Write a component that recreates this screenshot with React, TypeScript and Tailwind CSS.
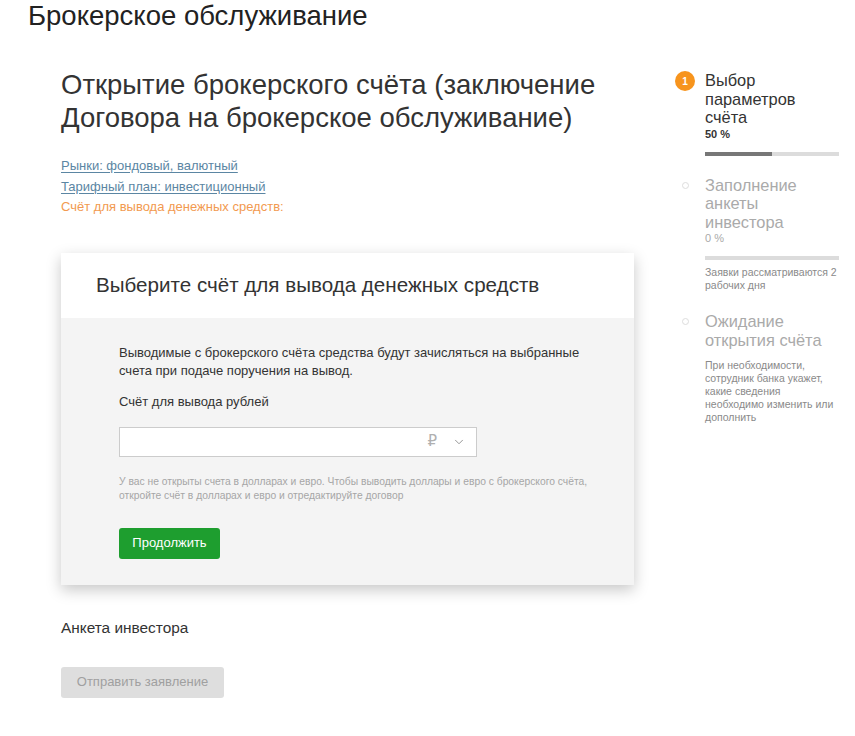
import { ChevronDown } from "lucide-react"

const font = { fontFamily: '"Liberation Sans", Arial, "DejaVu Sans", sans-serif' }

interface StepProps {
  marker: React.ReactNode
  title: string
  active?: boolean
  percent?: number
  note?: string
  noteGap?: string
}

function Step({ marker, title, active = false, percent, note, noteGap = "mt-[6px]" }: StepProps) {
  return (
    <div className="flex">
      <div className="flex w-[20px] justify-center">{marker}</div>
      <div className="ml-[10px] w-[134px]">
        <div className={`w-[124px] text-[16.4px] leading-[18.5px] ${active ? "text-[#333]" : "text-[#aaa]"}`}>
          {title}
        </div>
        {percent !== undefined && (
          <>
            <div className={`text-[11px] leading-[14px] ${active ? "font-bold text-[#333]" : "text-[#aaa]"}`}>
              {percent} %
            </div>
            <div className="mt-[11px] h-[4px] w-full bg-[#dcdcdc]">
              <div className="h-full bg-[#777]" style={{ width: `${percent}%` }} />
            </div>
          </>
        )}
        {note && <div className={`${noteGap} text-[10.5px] leading-[13px] text-[#8a8a8a]`}>{note}</div>}
      </div>
    </div>
  )
}

function SmallDot() {
  return <div className="mt-[6px] h-[7px] w-[7px] rounded-full border border-[#ddd]" />
}

export default function App() {
  return (
    <div className="min-h-[736px] w-[855px] bg-white text-[#333]" style={font}>
      <h1 className="pl-[28px] text-[27.5px] leading-[31px] text-[#222]">Брокерское обслуживание</h1>

      <div className="mt-[37px] flex pl-[61px]">
        {/* main column */}
        <div className="w-[573px]">
          <h2 className="text-[27.5px] leading-[33px] text-[#333]">
            Открытие брокерского счёта (заключение Договора на брокерское обслуживание)
          </h2>

          <div className="mt-[22px] text-[13px] leading-[20.5px]">
            <div>
              <a className="text-[#5b86a3] underline underline-offset-2">Рынки: фондовый, валютный</a>
            </div>
            <div>
              <a className="text-[#5b86a3] underline underline-offset-2">Тарифный план: инвестиционный</a>
            </div>
            <div className="text-[#f29a50]">Счёт для вывода денежных средств:</div>
          </div>

          <div className="mt-[35px] bg-[#f4f4f4] shadow-[0_5px_14px_rgba(0,0,0,0.22)]">
            <div className="flex h-[65px] items-center bg-white pl-[35px]">
              <div className="text-[20.6px] text-[#333]">Выберите счёт для вывода денежных средств</div>
            </div>
            <div className="pl-[58px] pr-[34px] pt-[26px] pb-[26px]">
              <p className="text-[13px] leading-[18px] text-[#333]">
                Выводимые с брокерского счёта средства будут зачисляться на выбранные счета при подаче поручения на
                вывод.
              </p>
              <div className="mt-[13px] text-[13px] leading-[18px] text-[#333]">Счёт для вывода рублей</div>
              <div className="mt-[16px] flex h-[30px] w-[358px] items-center justify-end border border-[#ccc] bg-white pr-[10px]">
                <span className="text-[15px] text-[#b0b0b0]" style={{ fontFamily: '"DejaVu Sans", sans-serif' }}>
                  ₽
                </span>
                <ChevronDown className="ml-[15px] h-[14px] w-[14px] text-[#888]" strokeWidth={1.5} />
              </div>
              <p className="mt-[18px] text-[10.3px] leading-[14px] text-[#a6a6a6]">
                У вас не открыты счета в долларах и евро. Чтобы выводить доллары и евро с брокерского счёта, откройте
                счёт в долларах и евро и отредактируйте договор
              </p>
              <button className="mt-[25px] h-[31px] w-[101px] rounded-[3px] bg-[#1e9e2f] text-[13px] text-white">
                Продолжить
              </button>
            </div>
          </div>

          <div className="mt-[33px] text-[15.4px] leading-[20px] text-[#333]">Анкета инвестора</div>
          <button className="mt-[29px] h-[31px] w-[163px] rounded-[3px] bg-[#dedede] text-[13px] text-[#a0a0a0]">
            Отправить заявление
          </button>
        </div>

        {/* sidebar */}
        <div className="ml-[41px] flex w-[170px] flex-col pt-[3px]">
          <Step
            active
            marker={
              <div className="flex h-[20px] w-[20px] items-center justify-center rounded-full bg-[#f7941d] text-[10px] font-bold text-white">
                1
              </div>
            }
            title="Выбор параметров счёта"
            percent={50}
          />
          <div className="mt-[20px]">
            <Step
              marker={<SmallDot />}
              title="Заполнение анкеты инвестора"
              percent={0}
              note="Заявки рассматриваются 2 рабочих дня"
            />
          </div>
          <div className="mt-[20px]">
            <Step
              marker={<SmallDot />}
              title="Ожидание открытия счёта"
              note="При необходимости, сотрудник банка укажет, какие сведения необходимо изменить или дополнить"
              noteGap="mt-[10px]"
            />
          </div>
        </div>
      </div>
    </div>
  )
}
